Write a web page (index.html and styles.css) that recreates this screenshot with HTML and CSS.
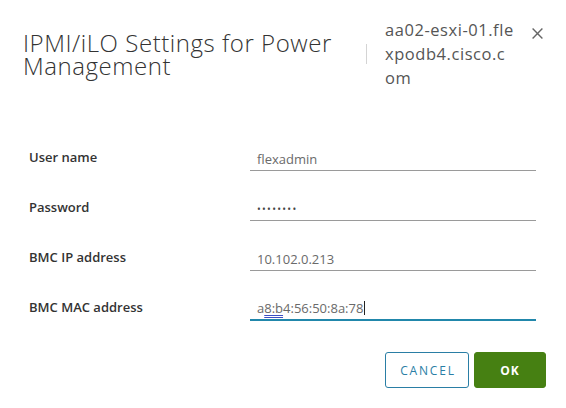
FILE: index.html
```html
<!DOCTYPE html>
<html>
<head>
<meta charset="utf-8">
<link rel="stylesheet" href="styles.css">
</head>
<body>
<div class="dialog">
  <div class="header">
    <h1 class="title">IPMI/iLO Settings for Power Management</h1>
    <div class="divider"></div>
    <div class="host">aa02-esxi-01.fle<br>xpodb4.cisco.c<br>om</div>
    <div class="close">
      <svg width="11" height="11" viewBox="0 0 11 11"><path d="M0.6 0.6 L10.4 10.4 M10.4 0.6 L0.6 10.4" stroke="#666" stroke-width="1.4" fill="none"/></svg>
    </div>
  </div>
  <div class="form">
    <div class="row">
      <div class="label">User name</div>
      <div class="field"><span class="value">flexadmin</span></div>
    </div>
    <div class="row">
      <div class="label">Password</div>
      <div class="field"><span class="value dots">••••••••</span></div>
    </div>
    <div class="row">
      <div class="label">BMC IP address</div>
      <div class="field"><span class="value">10.102.0.213</span></div>
    </div>
    <div class="row">
      <div class="label">BMC MAC address</div>
      <div class="field focused"><span class="value">a<span class="spell">8:b</span>4:56:50:8a:78</span><span class="caret"></span></div>
    </div>
  </div>
  <div class="footer">
    <button class="btn btn-outline">CANCEL</button>
    <button class="btn btn-success">OK</button>
  </div>
</div>
</body>
</html>
```

FILE: styles.css
```css
html, body {
  margin: 0;
  padding: 0;
  background: #fff;
}
.dialog {
  width: 566px;
  height: 408px;
  font-family: "Open Sans", "Liberation Sans", sans-serif;
  color: #313131;
  box-sizing: border-box;
}
.header {
  display: flex;
  align-items: center;
  padding: 18px 23px 0 23px;
}
.title {
  flex: 1;
  margin: 0;
  font-size: 24px;
  line-height: 23px;
  font-weight: 300;
  letter-spacing: 0.55px;
  color: #333;
}
.divider {
  width: 1px;
  height: 20px;
  background: #d4d4d4;
  margin-right: 18px;
}
.host {
  width: 135px;
  font-size: 16.5px;
  line-height: 24px;
  letter-spacing: 0.55px;
  color: #555;
  font-weight: 400;
  white-space: nowrap;
}
.close {
  align-self: flex-start;
  margin-top: 10px;
  margin-left: 12px;
  width: 11px;
  height: 11px;
  display: flex;
}
.form {
  margin-top: 57px;
  padding-left: 29px;
  display: flex;
  flex-direction: column;
  gap: 26px;
}
.row {
  display: flex;
  align-items: flex-start;
}
.label {
  width: 221px;
  font-size: 13px;
  line-height: 20px;
  font-weight: 600;
  color: #333;
}
.field {
  width: 286px;
  height: 24px;
  box-sizing: border-box;
  border-bottom: 1px solid #9a9a9a;
  padding-left: 7px;
  display: flex;
  align-items: center;
}
.field.focused {
  border-bottom: 2px solid #2187ab;
}
.value {
  font-size: 13px;
  line-height: 20px;
  color: #6a6a6a;
}
.dots {
  font-size: 10px;
  letter-spacing: 1.3px;
  color: #444;
}
.spell {
  text-decoration: underline double #3b4fc4;
  text-underline-offset: 2px;
}
.caret {
  width: 1px;
  height: 14px;
  background: #222;
  margin-left: 1px;
}
.footer {
  display: flex;
  justify-content: flex-end;
  gap: 5px;
  margin-top: 31px;
  padding-right: 20px;
}
.btn {
  height: 36px;
  border-radius: 3px;
  font-family: "Open Sans", "Liberation Sans", sans-serif;
  font-size: 12px;
  letter-spacing: 1.8px;
  cursor: pointer;
  padding: 0;
}
.btn-outline {
  width: 84px;
  background: #fff;
  border: 1px solid #2a7ea5;
  color: #2a7ea5;
  font-weight: 500;
  padding-left: 2px;
}
.btn-success {
  width: 72px;
  background: #468012;
  border: 1px solid #468012;
  color: #fff;
  font-weight: 700;
  letter-spacing: 1px;
}
```
